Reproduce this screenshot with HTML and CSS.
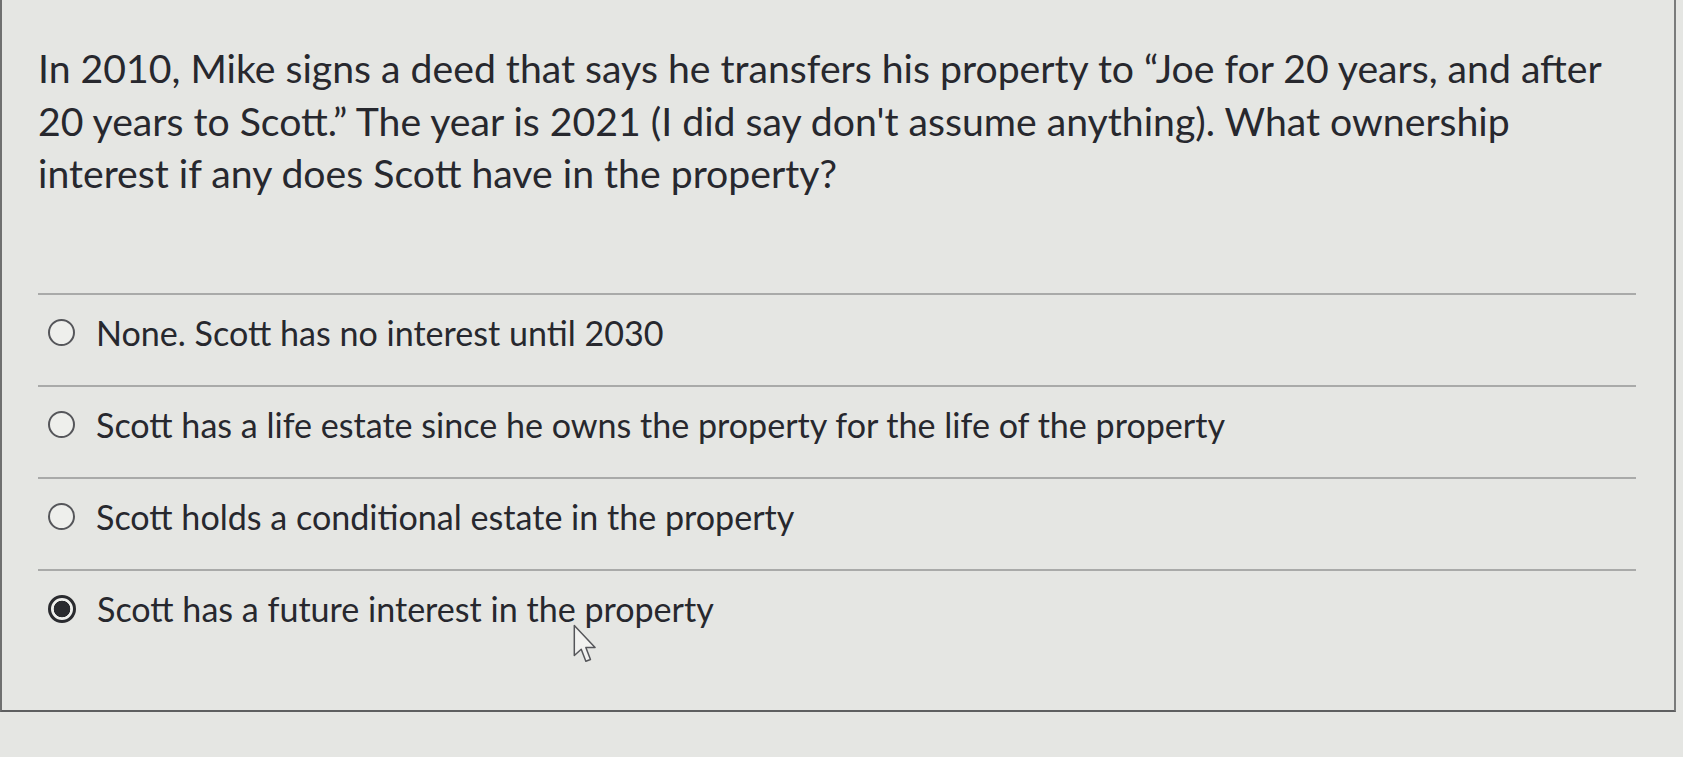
FILE: index.html
```
<!DOCTYPE html>
<html>
<head>
<meta charset="utf-8">
<link rel="stylesheet" href="styles.css">
</head>
<body>
<div class="card">
  <p class="question">In 2010, Mike signs a deed that says he transfers his property to “Joe for 20 years, and after 20 years to Scott.” The year is 2021 (I did say don't assume anything). What ownership interest if any does Scott have in the property?</p>
  <ul class="answers">
    <li class="answer"><span class="radio"></span><span class="label">None. Scott has no interest until 2030</span></li>
    <li class="answer"><span class="radio"></span><span class="label">Scott has a life estate since he owns the property for the life of the property</span></li>
    <li class="answer"><span class="radio"></span><span class="label">Scott holds a conditional estate in the property</span></li>
    <li class="answer"><span class="radio checked"></span><span class="label">Scott has a future interest in the property</span></li>
  </ul>
  <svg class="cursor" width="30" height="42" viewBox="0 0 26 36"><path d="M2 2 L2 28 L8 22.5 L12 33 L16 31.5 L12 21 L20 21 Z" fill="#f2f2f0" stroke="#55565a" stroke-width="1.3" stroke-linejoin="round"/></svg>
</div>
</body>
</html>
```
FILE: styles.css
```
html, body {
  margin: 0;
  padding: 0;
}
body {
  background: #e5e6e3;
  font-family: Lato, "Open Sans", sans-serif;
  color: #27282e;
  width: 1683px;
  height: 757px;
  overflow: hidden;
}
.card {
  position: relative;
  box-sizing: border-box;
  height: 712px;
  width: 1676px;
  border-left: 2px solid #6f7070;
  border-right: 2px solid #7a7b7b;
  border-bottom: 2px solid #5e5f60;
  padding: 42px 0 0 36px;
}
.question {
  margin: 0;
  font-size: 39.2px;
  line-height: 52.5px;
  width: 1580px;
}
.answers {
  list-style: none;
  margin: 93px 0 0 0;
  padding: 0;
  width: 1598px;
}
.answer {
  display: flex;
  align-items: center;
  height: 92px;
  border-top: 2px solid #a9aaa9;
  box-sizing: border-box;
  padding-left: 10px;
  font-size: 34.1px;
  padding-bottom: 14px;
}
.radio {
  width: 23px;
  height: 23px;
  border: 2.5px solid #55565a;
  border-radius: 50%;
  margin-right: 21px;
  flex: none;
  box-sizing: content-box;
  background: #eeefec;
}
.radio.checked {
  border: 3px solid #2a2b2f;
  width: 22px;
  height: 22px;
  background: radial-gradient(circle, #2a2b2f 0 8px, #eeefec 8.6px);
}
.cursor {
  position: absolute;
  left: 570px;
  top: 623px;
}
```
